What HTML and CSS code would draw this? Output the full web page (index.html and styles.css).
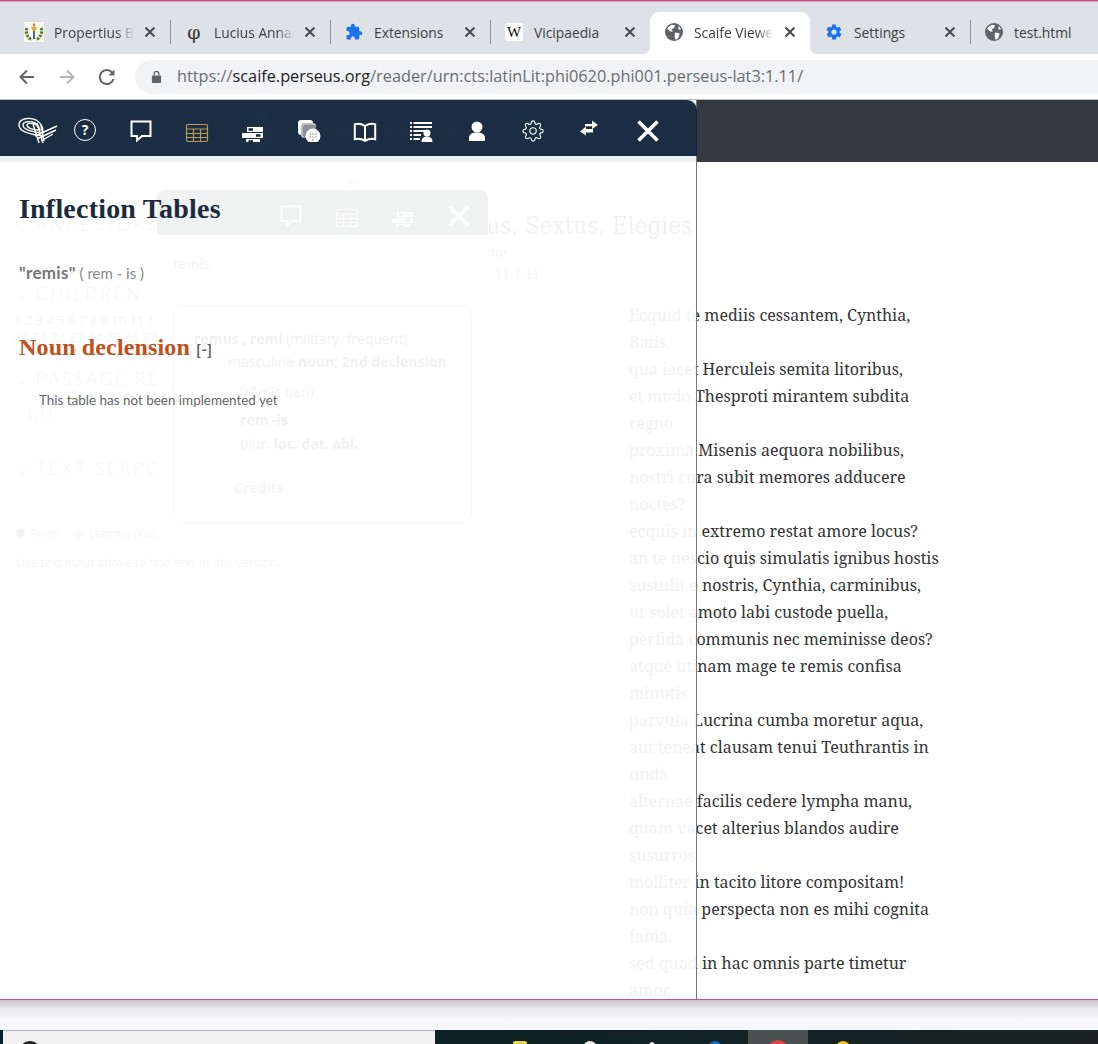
FILE: index.html
```html
<!DOCTYPE html>
<html lang="en">
<head>
<meta charset="utf-8">
<title>Scaife Viewer</title>
<link rel="stylesheet" href="styles.css">
</head>
<body>
<svg class="sprite" aria-hidden="true">
  <symbol id="i-comment" viewBox="0 0 28 28"><path d="M4.500 7.500h19v14.500H15l-5 4.500V22H4.500z" fill="none" stroke="currentColor" stroke-width="2"/></symbol>
  <symbol id="i-table" viewBox="0 0 28 28"><g fill="none" stroke="currentColor" stroke-width="1.200"><rect x="3.500" y="10.500" width="21" height="17" rx="1.500"/><path d="M3.500 15h21M3.500 19.500h21M3.500 23.500h21M10.500 15v12.500M17.500 15v12.500"/></g></symbol>
  <symbol id="i-print" viewBox="0 0 28 28"><path fill="currentColor" d="M8 13h16v5H8zM3 19h21v5H3zM7 25h14v5H7z"/><path fill="#12243a" d="M9.500 14.200h4.500v2.600H9.500zM17 20.200h4.500v2.600H17zM9.500 26.200h4.500v2.600H9.500z"/></symbol>
  <symbol id="i-globes" viewBox="0 0 28 28"><rect x="3" y="6" width="15" height="15" rx="3" fill="currentColor"/><rect x="6" y="9" width="15" height="15" rx="3" fill="#b9bcc0"/><rect x="8" y="11" width="13" height="13" rx="3" fill="#8b8f94"/><circle cx="18" cy="22" r="7.500" fill="currentColor"/><g fill="#777"><circle cx="15" cy="20" r=".7"/><circle cx="18" cy="20" r=".7"/><circle cx="21" cy="20" r=".7"/><circle cx="15" cy="23" r=".7"/><circle cx="18" cy="23" r=".7"/><circle cx="21" cy="23" r=".7"/><circle cx="18" cy="26" r=".7"/></g></symbol>
  <symbol id="i-book" viewBox="0 0 28 28"><path d="M14 12c-3-2-7-2.500-10.200-1.800v15c3.200-.7 7.200-.2 10.200 1.800 3-2 7-2.500 10.200-1.800v-15C21 9.500 17 10 14 12zM14 12v15" fill="none" stroke="currentColor" stroke-width="2"/></symbol>
  <symbol id="i-listuser" viewBox="0 0 28 28"><path stroke="currentColor" stroke-width="1.800" d="M3 9h2M6.500 9H25M3 13h2M6.500 13H25M3 17h2M6.500 17H19M3 21h2M6.500 21H14M3 25h2M6.500 25H13"/><circle cx="20" cy="19" r="3.500" fill="currentColor"/><path d="M14.500 28c0-4 2.500-5.500 5.500-5.500s5.500 1.500 5.500 5.500z" fill="currentColor"/></symbol>
  <symbol id="i-user" viewBox="0 0 28 28"><circle cx="14" cy="13" r="5.500" fill="currentColor"/><path d="M6 27v-3c0-3.500 3-5.500 8-5.500s8 2 8 5.500v3z" fill="currentColor"/></symbol>
  <symbol id="i-gear" viewBox="0 0 28 28"><g transform="translate(3 6) scale(.92)" fill="none" stroke="currentColor" stroke-width="1.200"><path d="M12 15.500a3.500 3.500 0 1 0 0-7 3.500 3.500 0 0 0 0 7z"/><path d="M19.400 15a1.650 1.650 0 0 0 .33 1.820l.06.06a2 2 0 0 1 0 2.830 2 2 0 0 1-2.830 0l-.06-.06a1.650 1.650 0 0 0-1.820-.33 1.650 1.650 0 0 0-1 1.510V21a2 2 0 0 1-2 2 2 2 0 0 1-2-2v-.09A1.650 1.650 0 0 0 9 19.400a1.650 1.650 0 0 0-1.820.33l-.06.06a2 2 0 0 1-2.830 0 2 2 0 0 1 0-2.830l.06-.06a1.650 1.650 0 0 0 .33-1.820 1.650 1.650 0 0 0-1.510-1H3a2 2 0 0 1-2-2 2 2 0 0 1 2-2h.09A1.650 1.650 0 0 0 4.600 9a1.650 1.650 0 0 0-.33-1.820l-.06-.06a2 2 0 0 1 0-2.830 2 2 0 0 1 2.830 0l.06.06a1.650 1.650 0 0 0 1.820.33H9a1.650 1.650 0 0 0 1-1.510V3a2 2 0 0 1 2-2 2 2 0 0 1 2 2v.09a1.650 1.650 0 0 0 1 1.510 1.650 1.650 0 0 0 1.820-.33l.06-.06a2 2 0 0 1 2.830 0 2 2 0 0 1 0 2.830l-.06.06a1.650 1.650 0 0 0-.33 1.820V9a1.650 1.650 0 0 0 1.510 1H21a2 2 0 0 1 2 2 2 2 0 0 1-2 2h-.09a1.650 1.650 0 0 0-1.510 1z"/></g></symbol>
  <symbol id="i-swap" viewBox="0 0 28 28"><path fill="currentColor" d="M10 10h7V6.500l6 4.500-6 4v-2.700h-7zM18 15h-7v-2.500l-6 5 6 4v-3h7z"/></symbol>
  <symbol id="i-close" viewBox="0 0 28 28"><path d="M7.500 7.500l19 19M26.500 7.500l-19 19" stroke="currentColor" stroke-width="3.600" fill="none"/></symbol>
  <symbol id="i-x" viewBox="0 0 12 12"><path d="M1.500 1.500l9 9M10.500 1.500l-9 9" stroke="currentColor" stroke-width="2" fill="none"/></symbol>
  <symbol id="i-globe" viewBox="0 0 16 16"><circle cx="8" cy="8" r="8" fill="#5f6368"/><path fill="#fff" d="M3 3.500l3-2 3 .5-1 2.500-2 1 1 2-2.500 0L2 5zM9 8.500l4 .5-1 4-2.500 2-1-3zM12 2.500l2.500 3-2.500.5z"/></symbol>
</svg>

<header class="tabstrip">
  <div class="tab">
    <svg class="favicon crest" viewBox="0 0 20 20"><rect width="20" height="20" fill="#fbfbf4"/><path d="M3 6c-2 4 0 9 5 12M17 6c2 4 0 9-5 12" fill="none" stroke="#52782f" stroke-width="3" stroke-dasharray="2.500 1"/><path d="M7 5h6l-2 5H9z" fill="#e0b52c"/><rect x="9" y="9" width="2" height="8" fill="#3b6a9e"/><path d="M10 1c2 2 1 3 0 4-1-1-2-2 0-4z" fill="#d9652a"/></svg>
    <span class="tab-title fade">Propertius Book</span>
    <svg class="tab-x"><use href="#i-x"/></svg>
    <i class="tab-sep"></i>
  </div>
  <div class="tab">
    <span class="favicon phi">φ</span>
    <span class="tab-title fade">Lucius Annaeus</span>
    <svg class="tab-x"><use href="#i-x"/></svg>
    <i class="tab-sep"></i>
  </div>
  <div class="tab">
    <svg class="favicon" viewBox="0 0 24 24"><path fill="#1a73e8" d="M20.500 11H19V7c0-1.100-.9-2-2-2h-4V3.500a2.500 2.500 0 0 0-5 0V5H4c-1.100 0-2 .9-2 2v3.800h1.500a2.700 2.700 0 0 1 0 5.400H2V20c0 1.100.9 2 2 2h3.800v-1.500a2.700 2.700 0 0 1 5.400 0V22H17c1.100 0 2-.9 2-2v-4h1.500a2.500 2.500 0 0 0 0-5z"/></svg>
    <span class="tab-title">Extensions</span>
    <svg class="tab-x"><use href="#i-x"/></svg>
    <i class="tab-sep"></i>
  </div>
  <div class="tab">
    <span class="favicon wiki">W</span>
    <span class="tab-title">Vicipaedia</span>
    <svg class="tab-x tab-x-end"><use href="#i-x"/></svg>
  </div>
  <div class="tab tab-active">
    <svg class="favicon"><use href="#i-globe"/></svg>
    <span class="tab-title fade">Scaife Viewer</span>
    <svg class="tab-x tab-x-end"><use href="#i-x"/></svg>
  </div>
  <div class="tab">
    <svg class="favicon" viewBox="0 0 24 24"><path fill="#1a73e8" d="M19.400 13a7.500 7.500 0 0 0 0-2l2.100-1.600a.5.500 0 0 0 .1-.6l-2-3.500a.5.500 0 0 0-.6-.2l-2.500 1a7.300 7.300 0 0 0-1.700-1l-.4-2.700a.5.500 0 0 0-.5-.4h-4a.5.500 0 0 0-.5.400l-.4 2.700a7.300 7.300 0 0 0-1.700 1l-2.500-1a.5.500 0 0 0-.6.200l-2 3.500a.5.500 0 0 0 .1.600L4.600 11a7.500 7.500 0 0 0 0 2l-2.100 1.600a.5.500 0 0 0-.1.600l2 3.500c.1.200.4.300.6.200l2.500-1c.5.400 1.100.7 1.700 1l.4 2.700c0 .2.200.4.500.4h4c.3 0 .5-.2.500-.4l.4-2.700a7.300 7.300 0 0 0 1.700-1l2.500 1c.2.100.5 0 .6-.2l2-3.500a.5.500 0 0 0-.1-.6zM12 15.500a3.500 3.500 0 1 1 0-7 3.500 3.500 0 0 1 0 7z"/></svg>
    <span class="tab-title">Settings</span>
    <svg class="tab-x"><use href="#i-x"/></svg>
    <i class="tab-sep"></i>
  </div>
  <div class="tab">
    <svg class="favicon"><use href="#i-globe"/></svg>
    <span class="tab-title">test.html</span>
  </div>
</header>

<div class="toolbar">
  <svg class="nav-arrow" viewBox="0 0 20 20"><path d="M17 10H4M10 3.500L3.500 10l6.500 6.500" fill="none" stroke="#5f6368" stroke-width="2"/></svg>
  <svg class="nav-arrow" viewBox="0 0 20 20"><path d="M3 10h13M10 3.500l6.500 6.500-6.500 6.500" fill="none" stroke="#b4b7bb" stroke-width="2"/></svg>
  <svg class="nav-arrow" viewBox="0 0 20 20"><path d="M16.500 12a7 7 0 1 1-1.300-6.400" fill="none" stroke="#5f6368" stroke-width="2"/><path d="M17.500 2.500v6h-6z" fill="#5f6368"/></svg>
  <div class="omnibox">
    <svg class="lock" viewBox="0 0 12 14"><path d="M3.500 6V4a2.500 2.500 0 0 1 5 0v2" fill="none" stroke="#5f6368" stroke-width="1.400"/><rect x="1" y="6" width="10" height="8" rx="1" fill="#5f6368"/></svg>
    <span class="url">https://<b class="url-host">scaife.perseus.org</b>/reader/urn:cts:latinLit:phi0620.phi001.perseus-lat3:1.11/</span>
  </div>
</div>

<main class="viewport">
  <nav class="app-nav">
    <svg class="app-logo" viewBox="0 0 56 56"><path d="M28 2l6 10 8-6-2 14 12 22-10-4-8 14-8-14-18 10 12-26z" fill="#4e5761"/></svg>
    <span class="app-brand">Scaife Viewer</span>
    <span class="app-link">Browse Library</span>
    <span class="app-link app-link-last">Search</span>
  </nav>

  <div class="app-main">
    <aside class="sidebar">
      <h3 class="side-head">ANCESTORS</h3>
      <p class="side-crumb">Propertius</p>
      <h3 class="side-head side-gap-1">CHILDREN</h3>
      <p class="side-nums">1 2 3 4 5 6 7 8 9 10 11 12<br>20 21 22 23 24 25 26 27 28</p>
      <h3 class="side-head side-gap-2">PASSAGE REFERENCE</h3>
      <div class="side-box">1.11</div>
      <h3 class="side-head side-gap-3">TEXT SEARCH</h3>
      <div class="side-search"></div>
      <p class="side-radios"><span class="dot"></span>Form <span class="dot dot-2"></span>Lemma (Koine)</p>
      <p class="side-note">Use text input above to find text in this version.</p>
    </aside>

    <section class="reader">
      <div class="reader-back">←</div>
      <div class="reader-head">
        <h1 class="reader-title">Propertius, Sextus, Elegies</h1>
      </div>
      <p class="reader-sub reader-sub-1">Sextus Propertius auctor</p>
      <p class="reader-sub reader-sub-2">Elegies 1.11-1.11</p>
      <div class="verses">
        Ecquid te mediis cessantem, Cynthia,<br>Baiis,<br>
        qua iacet Herculeis semita litoribus,<br>
        et modo Thesproti mirantem subdita<br>regno<br>
        proxima Misenis aequora nobilibus,<br>
        nostri cura subit memores adducere<br>noctes?<br>
        ecquis in extremo restat amore locus?<br>
        an te nescio quis simulatis ignibus hostis<br>
        sustulit e nostris, Cynthia, carminibus,<br>
        ut solet amoto labi custode puella,<br>
        perfida communis nec meminisse deos?<br>
        atque utinam mage te remis confisa<br>minutis<br>
        parvula Lucrina cumba moretur aqua,<br>
        aut teneat clausam tenui Teuthrantis in<br>unda<br>
        alternae facilis cedere lympha manu,<br>
        quam vacet alterius blandos audire<br>susurros<br>
        molliter in tacito litore compositam!<br>
        non quia perspecta non es mihi cognita<br>fama,<br>
        sed quod in hac omnis parte timetur<br>amor.
      </div>
    </section>
  </div>

  <div class="popup">
    <div class="popup-head">
      <svg class="pop-icon"><use href="#i-comment"/></svg>
      <svg class="pop-icon"><use href="#i-table"/></svg>
      <svg class="pop-icon"><use href="#i-print"/></svg>
      <svg class="pop-icon pop-icon-close"><use href="#i-close"/></svg>
    </div>
    <p class="pop-word">remis</p>
    <div class="pop-card">
      <p class="entry entry-1"><b>remus , remi</b> (military, frequent)</p>
      <p class="entry entry-2">masculine <b>noun; 2nd declension</b></p>
      <p class="entry entry-3">(rēmīc ban)</p>
      <p class="entry entry-4"><b>rem -is</b></p>
      <p class="entry entry-5">plur. <b>loc. dat. abl.</b></p>
      <p class="entry entry-6"><b>Credits</b></p>
    </div>
  </div>

  <div class="panel">
    <div class="panel-bar">
      <span class="slot slot-logo">
        <svg class="logo-icon" viewBox="0 0 40 28"><g fill="none" stroke="currentColor" stroke-width="1.400"><path d="M27 22C17 21 2 19 2 11 2 4 13 3 19 6c5 3 7 8 7 12"/><path d="M25 19C16 18 6 16 6 11c0-4 8-4 12-2 3 2 5 5 5 8"/><path d="M22 16c-6 0-12-2-12-5 0-2 5-2 8-1 2 1 3 3 3 4"/><path d="M18 22L40 12M20 25l19-9M24 27l12-7M16 10l6 19M20 9l6 20M24 11l3 16"/></g></svg>
      </span>
      <span class="slot"><span class="help">?</span></span>
      <span class="slot"><svg class="bar-icon"><use href="#i-comment"/></svg></span>
      <span class="slot slot-gold"><svg class="bar-icon"><use href="#i-table"/></svg></span>
      <span class="slot"><svg class="bar-icon"><use href="#i-print"/></svg></span>
      <span class="slot"><svg class="bar-icon"><use href="#i-globes"/></svg></span>
      <span class="slot"><svg class="bar-icon"><use href="#i-book"/></svg></span>
      <span class="slot"><svg class="bar-icon"><use href="#i-listuser"/></svg></span>
      <span class="slot"><svg class="bar-icon"><use href="#i-user"/></svg></span>
      <span class="slot"><svg class="bar-icon"><use href="#i-gear"/></svg></span>
      <span class="slot"><svg class="bar-icon"><use href="#i-swap"/></svg></span>
      <span class="slot"><svg class="bar-icon"><use href="#i-close"/></svg></span>
    </div>
    <div class="panel-body">
      <h2 class="panel-title">Inflection Tables</h2>
      <p class="lemma"><b>"remis"</b> ( rem - is )</p>
      <h3 class="decl">Noun declension <span class="toggle">[-]</span></h3>
      <p class="notice">This table has not been implemented yet</p>
    </div>
  </div>
</main>

<div class="window-edge"></div>
<div class="window-shadow"></div>

<footer class="taskbar">
  <div class="task-search"><span class="task-circle"></span></div>
  <div class="task-icons">
    <i class="t-ico t-yellow"></i>
    <i class="t-ico t-white"></i>
    <i class="t-ico t-white t-small"></i>
    <i class="t-ico t-blue"></i>
    <span class="t-active"><i class="t-ico t-red"></i></span>
    <i class="t-ico t-star"></i>
  </div>
</footer>
</body>
</html>
```

FILE: styles.css
```css
* { box-sizing: border-box; }
html, body { margin: 0; padding: 0; }
body {
  width: 1098px;
  height: 1044px;
  overflow: hidden;
  display: flex;
  flex-direction: column;
  background: #fff;
  font-family: "Open Sans", "Noto Sans", sans-serif;
  color: #333;
}
p, h1, h2, h3 { margin: 0; }
.sprite { display: none; }

/* browser chrome */
.tabstrip {
  height: 54px;
  flex: none;
  display: flex;
  align-items: flex-end;
  padding-left: 10px;
  background: #dee1e6;
  border-top: 1px solid #cb4b80;
  box-shadow: inset 0 1px 0 rgba(203, 75, 128, .4);
  overflow: hidden;
}
.tab {
  flex: none;
  width: 160px;
  height: 42px;
  display: flex;
  align-items: center;
  padding: 0 0 2px 16px;
  font-size: 13.8px;
  color: #3c4043;
  position: relative;
}
.tab-active {
  background: #fff;
  border-radius: 9px 9px 0 0;
}
.tab-active::before,
.tab-active::after {
  content: "";
  position: absolute;
  bottom: 0;
  width: 7px;
  height: 7px;
}
.tab-active::before { left: -7px; background: radial-gradient(circle at 0 0, transparent 7px, #fff 7.5px); }
.tab-active::after { right: -7px; background: radial-gradient(circle at 100% 0, transparent 7px, #fff 7.5px); }
.favicon { flex: none; width: 18px; height: 18px; margin: 0 -1px; overflow: visible; }
.crest { width: 20px; height: 20px; margin: 0 -2px; }
.phi {
  font-family: "DejaVu Serif", serif;
  font-size: 19px;
  line-height: 18px;
  text-align: center;
  color: #333;
}
.wiki {
  background: #fff;
  border-radius: 2px;
  font-family: "Liberation Serif", serif;
  font-size: 15px;
  line-height: 18px;
  text-align: center;
  color: #111;
}
.tab-title {
  flex: none;
  width: 80px;
  margin-left: 12px;
  white-space: nowrap;
  overflow: hidden;
}
.fade { -webkit-mask-image: linear-gradient(90deg, #000 78%, transparent 100%); mask-image: linear-gradient(90deg, #000 78%, transparent 100%); }
.tab-x { flex: none; width: 12px; height: 12px; margin-left: 10px; margin-right: 14px; color: #45484c; }
.tab-x-end { margin-right: 0; }
.tab-sep { flex: none; width: 1px; height: 24px; margin-right: -1px; background: #8f9296; }

.toolbar {
  height: 46px;
  flex: none;
  display: flex;
  align-items: center;
  gap: 20px;
  padding-left: 17px;
  background: #fff;
  border-bottom: 1px solid #bcbec0;
}
.nav-arrow { flex: none; width: 20px; height: 20px; }
.omnibox {
  flex: none;
  width: 1000px;
  height: 34px;
  margin-left: -2px;
  display: flex;
  align-items: center;
  padding: 0 0 1px 16px;
  border-radius: 17px 0 0 17px;
  background: #f1f3f4;
}
.lock { width: 11px; height: 13px; flex: none; }
.url { margin-left: 15px; font-size: 16.3px; color: #6a6d71; white-space: nowrap; }
.url-host { font-weight: 400; color: #202124; }

/* page under the panel */
.viewport {
  height: 899px;
  flex: none;
  position: relative;
  overflow: hidden;
  background: #fff;
}
.window-edge { height: 1px; flex: none; background: #c7528c; }
.app-nav {
  height: 62px;
  display: flex;
  align-items: center;
  background: #343a40;
  color: #fff;
  padding-left: 228px;
}
.app-logo { width: 56px; height: 56px; flex: none; }
.app-brand { margin-left: 16px; font-family: "Liberation Serif", serif; font-size: 20px; font-weight: 700; }
.app-link { margin-left: 27px; font-size: 15px; }
.app-link-last { margin-left: 30px; }
.app-main { display: grid; grid-template-columns: 340px 1fr; }
.sidebar { padding: 50px 0 0 18px; overflow: hidden; white-space: nowrap; }
.side-head { position: relative; font-family: Lato, sans-serif; font-size: 17px; line-height: 26px; font-weight: 300; letter-spacing: .17em; padding-left: 18px; color: #555; }
.side-head::before {
  content: "";
  position: absolute;
  left: 1px;
  top: 9px;
  width: 7px;
  height: 7px;
  border-right: 1px solid #888;
  border-bottom: 1px solid #888;
  transform: rotate(45deg);
}
.side-crumb { margin-top: 22px; font-size: 13px; height: 20px; color: #555; }
.side-gap-1 { margin-top: 1px; }
.side-nums { margin-top: 5px; font-size: 13px; line-height: 17px; color: #555; margin-left: -4px; }
.side-gap-2 { margin-top: 20px; }
.side-box { height: 32px; margin: 6px 0 0 -4px; padding-left: 11px; border: 1px solid #ddd; border-radius: 3px; font-size: 14px; line-height: 30px; color: #555; }
.side-gap-3 { margin-top: 26px; }
.side-search { height: 32px; margin: 6px 0 0 -6px; border: 1px solid #ddd; border-radius: 4px; }
.side-radios { margin: 5px 0 0 -2px; font-size: 12px; color: #666; }
.dot { display: inline-block; width: 9px; height: 9px; margin-right: 5px; border-radius: 50%; background: #555; }
.dot-2 { margin-left: 12px; background: #aaa; }
.side-note { margin: 12px 0 0 -2px; font-size: 12px; color: #666; }

.reader { min-width: 0; }
.reader-back { margin: 8px 0 0 6px; height: 22px; font-size: 15px; color: #555; }
.reader-head { width: 408px; }
.reader-title {
  margin-top: 18px;
  font-family: "DejaVu Serif", serif;
  font-stretch: condensed;
  font-size: 24px;
  line-height: 32px;
  font-weight: 400;
  text-align: center;
  color: #333;
  white-space: nowrap;
}
.reader-sub {
  font-family: "DejaVu Serif", serif;
  font-stretch: condensed;
  font-size: 13px;
  line-height: 22px;
  color: #555;
  text-align: right;
  white-space: nowrap;
}
.reader-sub-1 { width: 168px; font-style: italic; }
.reader-sub-2 { width: 200px; }
.verses {
  margin: 16px 0 0 289px;
  font-family: "Noto Serif", "DejaVu Serif", serif;
  font-stretch: condensed;
  font-size: 16px;
  line-height: 27px;
  color: #333;
  white-space: nowrap;
}

.popup {
  position: absolute;
  left: 156px;
  top: 89px;
  width: 333px;
  height: 352px;
  background: #fff;
  border: 1px solid #ddd;
  border-radius: 8px;
  color: #333;
  font-size: 14px;
}
.popup-head {
  height: 45px;
  display: flex;
  justify-content: flex-end;
  align-items: center;
  padding-right: 1px;
  background: #343a40;
  color: #fff;
  border-radius: 8px 8px 0 0;
}
.pop-icon { flex: none; width: 28px; height: 28px; margin: 0 14px; overflow: visible; }
.pop-icon-close { margin: 0 17px 0 11px; }
.pop-word { margin: 19px 0 0 16px; font-size: 14px; }
.pop-card {
  height: 218px;
  margin: 32px 16px 0;
  padding-top: 21px;
  border: 1px solid #999;
  border-radius: 10px;
}
.entry { line-height: 23px; white-space: nowrap; }
.entry-1 { margin-left: 20px; }
.entry-2 { margin-left: 54px; }
.entry-3 { margin: 7px 0 0 66px; }
.entry-4 { margin: 5px 0 0 66px; }
.entry-5 { margin: 1px 0 0 66px; }
.entry-6 { margin: 21px 0 0 60px; color: #c0501c; }

/* inflection panel */
.panel {
  position: absolute;
  left: 0;
  top: 0;
  bottom: 0;
  width: 697px;
  background: rgba(255, 255, 255, .93);
  border-right: 1px solid #77797c;
}
.panel-bar {
  height: 56px;
  margin-right: -1px;
  display: flex;
  align-items: center;
  padding-left: 17px;
  background: rgba(10, 30, 54, .93);
  color: #fff;
  border-radius: 0 10px 0 0;
}
.slot { flex: none; width: 56px; display: flex; justify-content: center; align-items: center; }
.slot-logo { width: 40px; }
.slot-gold { color: #b89b55; }
.bar-icon { width: 28px; height: 28px; overflow: visible; }
.logo-icon { flex: none; width: 40px; height: 28px; overflow: visible; }
.help {
  width: 22px;
  height: 22px;
  margin-top: 4px;
  border: 1.500px solid #fff;
  border-radius: 50%;
  font-size: 14px;
  font-weight: 700;
  line-height: 19px;
  text-align: center;
}
.panel-body { padding: 35px 0 0 19px; }
.panel-title {
  font-family: "Liberation Serif", serif;
  font-size: 28px;
  line-height: 36px;
  font-weight: 700;
  letter-spacing: .2px;
  color: #1c2b3c;
}
.lemma { margin-top: 35px; font-family: Lato, sans-serif; font-size: 15px; line-height: 22px; color: #888; }
.lemma b { font-size: 17px; letter-spacing: .3px; color: #777; }
.decl {
  margin-top: 48px;
  font-family: "Liberation Serif", serif;
  font-size: 24px;
  line-height: 30px;
  font-weight: 700;
  letter-spacing: .15px;
  color: #c0501c;
}
.toggle { font-family: Lato, sans-serif; font-size: 16px; letter-spacing: 0; color: #666; }
.notice { margin: 26px 0 0 20px; font-family: Lato, sans-serif; font-size: 13.45px; line-height: 20px; color: #666; }

/* desktop behind the window */
.window-shadow {
  height: 30px;
  flex: none;
  background: linear-gradient(180deg, #c8c8ca 0, #e9e9eb 30%, #f8f8fa 70%, #f8f8fa 100%);
}
.taskbar {
  flex: 1;
  display: flex;
  padding-left: 3px;
  background: linear-gradient(90deg, #06222a, #1a2322);
  overflow: hidden;
}
.task-search {
  flex: none;
  width: 432px;
  padding: 10px 0 0 16px;
  background: #f1f1f1;
  border-top: 1px solid #b4b4b4;
}
.task-circle { display: block; width: 22px; height: 22px; border-radius: 50%; border: 3px solid #222; }
.task-icons { flex: 1; display: flex; align-items: flex-start; padding-left: 78px; }
.t-ico { flex: none; display: block; width: 14px; height: 14px; margin-top: 11px; border-radius: 50%; }
.t-yellow { background: #e8d44d; border-radius: 2px; }
.t-white { margin-left: 56px; background: #eee; }
.t-small { margin-top: 12px; margin-left: 51px; width: 8px; }
.t-blue { margin-left: 52px; background: #1769c2; }
.t-active { flex: none; width: 60px; height: 14px; margin-left: 26px; background: #4a5252; display: flex; justify-content: center; }
.t-red { background: #dd4444; width: 20px; height: 20px; margin-top: 10px; }
.t-star { margin-left: 28px; background: #eec22e; }
```
